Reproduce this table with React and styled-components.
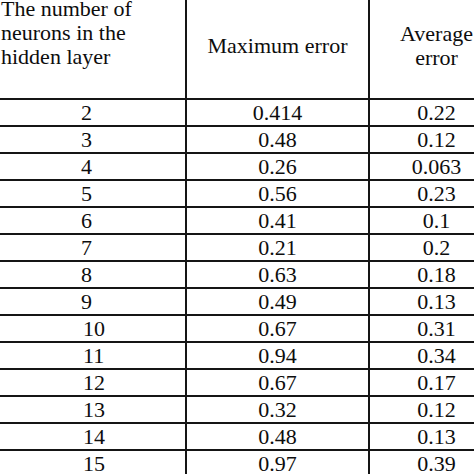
import React from 'react'
import styled, { createGlobalStyle } from 'styled-components'

const GlobalStyle = createGlobalStyle`
  html, body {
    margin: 0;
    padding: 0;
    overflow: hidden;
    background: #fff;
  }
`

const Table = styled.table`
  border-collapse: collapse;
  table-layout: fixed;
  width: 513px;
  margin: -8px 0 0 -10px;
  font-family: "Liberation Serif", "Times New Roman", serif;
  font-size: 22px;
  line-height: 24px;
  color: #0d0d0d;
`

const HeadRow = styled.tr`
  height: 106px;
`

const Row = styled.tr`
  height: 27px;
`

const HeadCell = styled.th`
  border: 2px solid #151515;
  font-weight: normal;
  padding: ${p => (p.$top ? '3px 0 0 9px' : '0')};
  text-align: ${p => (p.$top ? 'left' : 'center')};
  vertical-align: ${p => (p.$top ? 'top' : 'middle')};
`

const NumCell = styled.td`
  border: 2px solid #151515;
  padding: 0 0 0 ${p => (p.$wide ? 91 : 89)}px;
  text-align: left;
  vertical-align: middle;
`

const Cell = styled.td`
  border: 2px solid #151515;
  padding: 0;
  text-align: center;
  vertical-align: middle;
`

const rows = [
  [2, '0.414', '0.22'],
  [3, '0.48', '0.12'],
  [4, '0.26', '0.063'],
  [5, '0.56', '0.23'],
  [6, '0.41', '0.1'],
  [7, '0.21', '0.2'],
  [8, '0.63', '0.18'],
  [9, '0.49', '0.13'],
  [10, '0.67', '0.31'],
  [11, '0.94', '0.34'],
  [12, '0.67', '0.17'],
  [13, '0.32', '0.12'],
  [14, '0.48', '0.13'],
  [15, '0.97', '0.39'],
]

export default function App() {
  return (
    <>
      <GlobalStyle />
      <Table>
        <colgroup>
          <col style={{ width: 195 }} />
          <col style={{ width: 183 }} />
          <col style={{ width: 135 }} />
        </colgroup>
        <thead>
          <HeadRow>
            <HeadCell $top>
              The number of<br />neurons in the<br />hidden layer
            </HeadCell>
            <HeadCell>Maximum error</HeadCell>
            <HeadCell>Average<br />error</HeadCell>
          </HeadRow>
        </thead>
        <tbody>
          {rows.map(([n, max, avg]) => (
            <Row key={n}>
              <NumCell $wide={n >= 10}>{n}</NumCell>
              <Cell>{max}</Cell>
              <Cell>{avg}</Cell>
            </Row>
          ))}
        </tbody>
      </Table>
    </>
  )
}
